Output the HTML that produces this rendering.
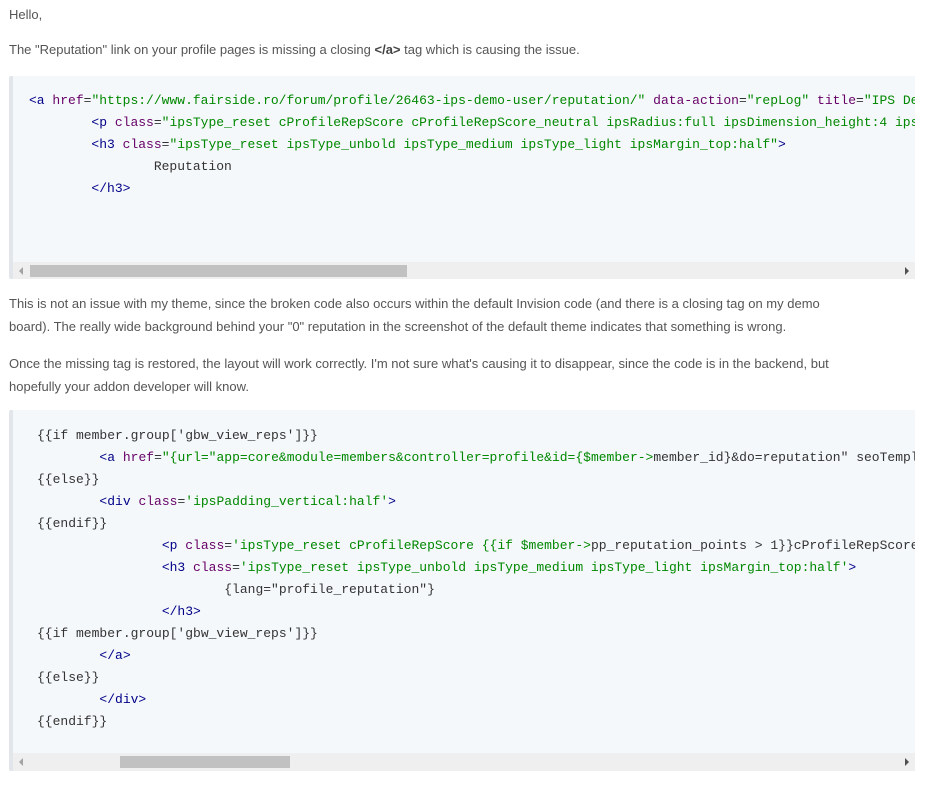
<!DOCTYPE html>
<html><head><meta charset="utf-8"><style>
body{margin:0;background:#fff;width:929px;height:792px;overflow:hidden;font-family:"Liberation Sans",sans-serif;font-size:13px;color:#555;}
.t{position:absolute;left:9px;white-space:nowrap;line-height:16px;}
.blk{position:absolute;left:9px;width:906px;background:#f5f8fb;border-left:4px solid #e2e6ea;box-sizing:border-box;overflow:hidden;border-radius:2px 0 0 2px;}
.code{position:absolute;white-space:pre;font-family:"Liberation Mono",monospace;font-size:13px;line-height:22px;color:#333;tab-size:8;}
.sb{position:absolute;left:0;right:0;height:17px;background:#efefef;}
.th{position:absolute;top:3px;height:12px;background:#c1c1c1;}
.al{position:absolute;left:6px;top:5px;width:0;height:0;border-top:4px solid transparent;border-bottom:4px solid transparent;border-right:4px solid #a3a3a3;}
.ar{position:absolute;right:6px;top:5px;width:0;height:0;border-top:4px solid transparent;border-bottom:4px solid transparent;border-left:4px solid #505050;}
.g{color:#008800}.b{color:#000088}.p{color:#660066}
</style></head><body>
<div class="t" style="top:7px">Hello,</div>
<div class="t" style="top:42px">The "Reputation" link on your profile pages is missing a closing <b style="color:#444">&lt;/a&gt;</b> tag which is causing the issue.</div>

<div class="blk" style="top:76px;height:203px">
<div class="code" style="left:16px;top:14px"><span class="b">&lt;a</span> <span class="p">href</span>=<span class="g">"https://www.fairside.ro/forum/profile/26463-ips-demo-user/reputation/"</span> <span class="p">data-action</span>=<span class="g">"repLog"</span> <span class="p">title</span>=<span class="g">"IPS Demo User"</span>
	<span class="b">&lt;p</span> <span class="p">class</span>=<span class="g">"ipsType_reset cProfileRepScore cProfileRepScore_neutral ipsRadius:full ipsDimension_height:4 ipsDimension"</span>
	<span class="b">&lt;h3</span> <span class="p">class</span>=<span class="g">"ipsType_reset ipsType_unbold ipsType_medium ipsType_light ipsMargin_top:half"</span><span class="b">&gt;</span>
		Reputation
	<span class="b">&lt;/h3&gt;</span></div>
<div class="sb" style="top:186px"><div class="al"></div><div class="th" style="left:17px;width:377px"></div><div class="ar"></div></div>
</div>

<div class="t" style="top:292px;line-height:23px;white-space:normal;width:845px">This is not an issue with my theme, since the broken code also occurs within the default Invision code (and there is a closing tag on my demo board). The really wide background behind your "0" reputation in the screenshot of the default theme indicates that something is wrong.</div>
<div class="t" style="top:352px;line-height:23px;white-space:normal;width:845px">Once the missing tag is restored, the layout will work correctly. I'm not sure what's causing it to disappear, since the code is in the backend, but hopefully your addon developer will know.</div>

<div class="blk" style="top:410px;height:361px">
<div class="code" style="left:24px;top:15px">{{if member.group['gbw_view_reps']}}
	<span class="b">&lt;a</span> <span class="p">href</span>=<span class="g">"{url="app=core&amp;module=members&amp;controller=profile&amp;id={$member-&gt;</span>member_id}&amp;do=reputation" seoTemplate="profile_reputation"
{{else}}
	<span class="b">&lt;div</span> <span class="p">class</span>=<span class="g">'ipsPadding_vertical:half'</span><span class="b">&gt;</span>
{{endif}}
		<span class="b">&lt;p</span> <span class="p">class</span>=<span class="g">'ipsType_reset cProfileRepScore {{if $member-&gt;</span>pp_reputation_points &gt; 1}}cProfileRepScore_positive
		<span class="b">&lt;h3</span> <span class="p">class</span>=<span class="g">'ipsType_reset ipsType_unbold ipsType_medium ipsType_light ipsMargin_top:half'</span><span class="b">&gt;</span>
			{lang="profile_reputation"}
		<span class="b">&lt;/h3&gt;</span>
{{if member.group['gbw_view_reps']}}
	<span class="b">&lt;/a&gt;</span>
{{else}}
	<span class="b">&lt;/div&gt;</span>
{{endif}}</div>
<div class="sb" style="top:343px;height:18px"><div class="al"></div><div class="th" style="left:107px;width:170px"></div><div class="ar"></div></div>
</div>
</body></html>
